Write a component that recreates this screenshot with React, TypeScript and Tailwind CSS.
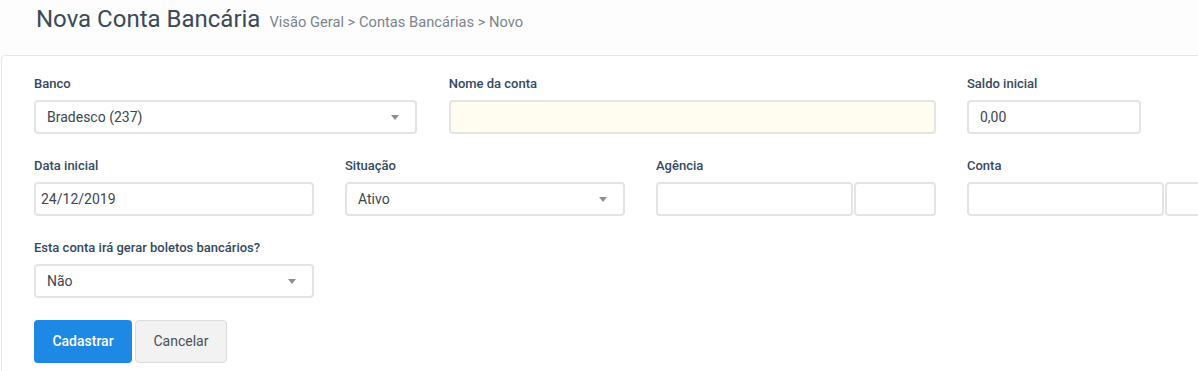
import { ReactNode } from "react";

function Label({ children }: { children: ReactNode }) {
  return <label className="block h-[18px] mb-[8px] text-[13px] leading-[19px] font-medium text-[#34495e]">{children}</label>;
}

function Caret() {
  return (
    <svg className="w-[8px] h-[5px]" viewBox="0 0 8 5">
      <path d="M0 0h8L4 5z" fill="#8a9096" />
    </svg>
  );
}

function SelectBox({ value }: { value: string }) {
  return (
    <div className="h-[34px] w-full flex items-center justify-between pl-[11px] pr-[16px] border-2 border-[#e4e4e4] rounded-[4px] bg-white text-[14px] text-[#3d4650]">
      <span>{value}</span>
      <Caret />
    </div>
  );
}

function Input({ value, className = "" }: { value?: string; className?: string }) {
  return (
    <div className={`h-[34px] flex items-center border-2 border-[#e4e4e4] rounded-[4px] text-[14px] text-[#3d4650] ${className}`}>
      {value}
    </div>
  );
}

export default function App() {
  return (
    <div className="w-[1198px] h-[371px] overflow-hidden bg-[#fdfdfd] font-['Roboto',sans-serif]">
      {/* Page heading */}
      <div className="h-[55px] pl-[36px] pt-[2px] flex items-baseline gap-[9px]">
        <h1 className="text-[24px] leading-[34px] text-[#3b4a58]">Nova Conta Bancária</h1>
        <span className="text-[14.7px] text-[#7b848c]">Visão Geral &gt; Contas Bancárias &gt; Novo</span>
      </div>

      <div className="ml-[1px] w-[1300px] border border-[#e6e6e6] rounded-tl-[4px] bg-white pt-[18px] pl-[32px] pb-[20px]">
        <div className="w-[1212.67px] grid grid-cols-12 gap-x-[31.33px] gap-y-[22px]">
          <div className="col-span-4">
            <Label>Banco</Label>
            <SelectBox value="Bradesco (237)" />
          </div>
          <div className="col-span-5">
            <Label>Nome da conta</Label>
            <Input className="bg-[#fffcf0]" />
          </div>
          <div className="col-span-2">
            <Label>Saldo inicial</Label>
            <Input value="0,00" className="pl-[11px] bg-white w-[174px]" />
          </div>
          <div className="col-span-1" />

          <div className="col-span-3">
            <Label>Data inicial</Label>
            <Input value="24/12/2019" className="pl-[5px] bg-white" />
          </div>
          <div className="col-span-3">
            <Label>Situação</Label>
            <SelectBox value="Ativo" />
          </div>
          <div className="col-span-3">
            <Label>Agência</Label>
            <div className="flex gap-[1px]">
              <Input className="flex-1 bg-white" />
              <Input className="w-[82px] bg-white" />
            </div>
          </div>
          <div className="col-span-3">
            <Label>Conta</Label>
            <div className="flex gap-[1px]">
              <Input className="flex-1 bg-white" />
              <Input className="w-[82px] bg-white" />
            </div>
          </div>

          <div className="col-span-3">
            <Label>Esta conta irá gerar boletos bancários?</Label>
            <SelectBox value="Não" />
          </div>
        </div>

        <div className="mt-[22px] flex gap-[3px]">
          <button className="h-[43px] w-[98px] rounded-[4px] bg-[#1e88e5] text-white text-[14px] font-medium">Cadastrar</button>
          <button className="h-[43px] w-[92px] rounded-[4px] bg-[#f2f2f2] border border-[#dcdcdc] text-[#4a4f55] text-[14px]">Cancelar</button>
        </div>
      </div>
    </div>
  );
}
